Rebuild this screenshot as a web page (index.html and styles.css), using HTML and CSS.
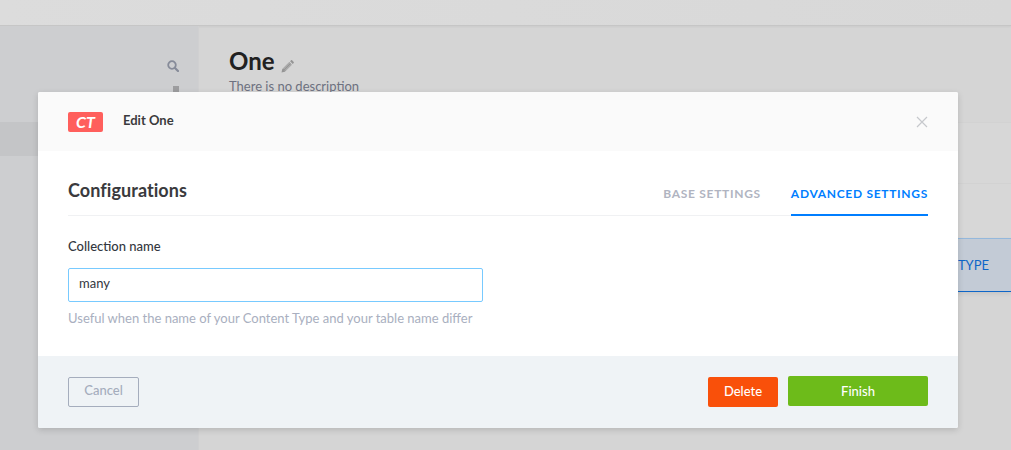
FILE: index.html
```html
<!DOCTYPE html>
<html lang="en">
<head>
<meta charset="utf-8">
<title>Edit One</title>
<link rel="stylesheet" href="styles.css">
</head>
<body>
<div class="page">
  <header class="topbar"></header>
  <div class="layout">
    <aside class="sidebar">
      <div class="side-search">
        <svg class="search-icon" viewBox="0 0 12 12" width="12" height="12"><circle cx="5" cy="5" r="3.800" fill="none" stroke="#868b99" stroke-width="1.800"/><path d="M8 8L11 11" stroke="#868b99" stroke-width="2.200" stroke-linecap="round"/></svg>
      </div>
      <div class="side-mark"></div>
      <div class="side-active"></div>
    </aside>
    <main class="main">
      <div class="title-row">
        <h1 class="title">One</h1>
        <svg class="pencil" viewBox="0.5 0.5 13 13" width="13" height="13"><path d="M1 13l.8-3.400 7-7 2.600 2.600-7 7z" fill="#959595"/><path d="M9.600 1.800l1-1c.3-.3.7-.3 1 0l1.600 1.600c.3.3.3.7 0 1l-1 1z" fill="#959595"/><path d="M3 9.500l6.300-6.300M4.500 11l6.300-6.300" stroke="#d5d5d5" stroke-width=".6"/></svg>
      </div>
      <p class="subtitle">There is no description</p>
      <div class="rows">
        <div class="row"></div>
        <div class="row"></div>
      </div>
      <div class="add-wrap"><span class="add-btn">ADD NEW FIELD TO THIS CONTENT TYPE</span></div>
    </main>
  </div>
</div>

<section class="modal">
  <div class="modal-head">
    <span class="badge">CT</span>
    <span class="modal-title">Edit One</span>
    <svg class="close" viewBox="0 0 12 12" width="12" height="12"><path d="M1 1l10 10M11 1L1 11" stroke="#c6c8cc" stroke-width="1.200" fill="none"/></svg>
  </div>
  <div class="modal-body">
    <div class="tabs-row">
      <h2 class="section-title">Configurations</h2>
      <nav class="tabs">
        <span class="tab">BASE SETTINGS</span>
        <span class="tab tab-active">ADVANCED SETTINGS</span>
      </nav>
    </div>
    <div class="field">
      <label class="label" for="cname">Collection name</label>
      <input class="input" id="cname" type="text" value="many">
      <p class="hint">Useful when the name of your Content Type and your table name differ</p>
    </div>
  </div>
  <div class="modal-foot">
    <button class="btn btn-cancel">Cancel</button>
    <div class="foot-actions">
      <button class="btn btn-delete">Delete</button>
      <button class="btn btn-finish">Finish</button>
    </div>
  </div>
</section>
</body>
</html>
```
FILE: styles.css
```css
* { box-sizing: border-box; }
html, body { margin: 0; padding: 0; height: 100%; overflow: hidden; }
body { font-family: Lato, "Open Sans", sans-serif; background: #d5d5d5; position: relative; }
.page { height: 450px; display: flex; flex-direction: column; }
.topbar { height: 26px; flex: none; background: linear-gradient(90deg, #dcdcdc, #d8d8d8); border-bottom: 1px solid #c6c6c6; box-shadow: 0 1px 2px rgba(0,0,0,.05); }
.layout { flex: 1; display: flex; min-height: 0; }
.sidebar { width: 199px; flex: none; background: #cdced0; border-right: 1px solid #d0d0d1; padding-top: 34px; display: flex; flex-direction: column; }
.side-search { height: 12px; display: flex; justify-content: flex-end; padding-right: 19px; }
.side-mark { width: 6px; height: 8px; background: #9d9d9f; margin: 14px 0 0 173px; }
.side-active { height: 34px; margin-top: 28px; background: #c4c5c7; }
.main { flex: 1; min-width: 0; padding: 21px 0 0 30px; color: #222; }
.title-row { display: flex; align-items: flex-end; height: 28px; }
.title { margin: 0; font-size: 24px; font-weight: 700; line-height: 28px; color: #212121; }
.pencil { margin: 0 0 2px 6px; }
.subtitle { margin: 3px 0 0; font-size: 13px; line-height: 16px; color: #6d7180; }
.rows { margin-top: 28px; margin-left: -30px; }
.row { height: 61px; border-top: 1px solid #d2d2d2; background: #d7d7d7; }
.add-wrap { height: 54px; margin-top: -6px; display: flex; justify-content: flex-end; }
.add-btn { height: 54px; width: 500px; flex: none; display: flex; align-items: center; justify-content: flex-end; padding-right: 22px; font-size: 13px; font-weight: 400; color: #0e66c8; background: #c3cbd6; border-top: 1px solid #94b8dc; border-bottom: 1px solid #0e66c8; box-shadow: 0 2px 4px rgba(0,0,0,.08); }
.modal { position: absolute; left: 38px; top: 92px; width: 920px; height: 336px; background: #fff; border-radius: 2px; box-shadow: 0 2px 6px rgba(0,0,0,.15); display: flex; flex-direction: column; overflow: hidden; }
.modal-head { height: 59px; flex: none; background: #fafafa; display: flex; align-items: center; padding: 0 30px; }
.badge { width: 35px; height: 20px; border-radius: 2px; background: #ff5f5c; color: #fff; font-size: 16px; font-weight: 700; font-style: italic; line-height: 20px; text-align: center; }
.modal-title { margin: -4px 0 0 20px; font-size: 13px; font-weight: 700; color: #3a3a3d; }
.close { margin-left: auto; margin-top: 1px; }
.modal-body { flex: 1; padding: 0 30px; }
.tabs-row { height: 65px; display: flex; justify-content: space-between; align-items: stretch; border-bottom: 1px solid #f0f1f3; }
.section-title { margin: 27px 0 0; font-size: 18px; font-weight: 700; line-height: 24px; letter-spacing: .07px; color: #3a3a3d; }
.tabs { display: flex; gap: 30px; }
.tab { padding-top: 35px; height: 65px; font-size: 12px; font-weight: 700; letter-spacing: .7px; line-height: 15px; color: #b0b4c1; }
.tab-active { color: #007eff; border-bottom: 2px solid #007eff; }
.field { padding-top: 22px; }
.label { display: block; font-size: 13px; font-weight: 500; line-height: 16px; color: #333740; }
.input { display: block; width: 415px; height: 34px; margin-top: 14px; padding: 0 10px 5px; border: 1px solid #78caff; border-radius: 2px; outline: 0; font: 400 13px Lato, sans-serif; color: #333740; background: #fff; }
.hint { margin: 8px 0 0; font-size: 13px; line-height: 16px; color: #a9afc0; }
.modal-foot { height: 72px; flex: none; background: #eff3f6; display: flex; justify-content: space-between; padding: 0 30px; }
.foot-actions { display: flex; gap: 10px; align-items: flex-start; }
.btn { font-family: Lato, sans-serif; font-size: 13px; font-weight: 500; border-radius: 2px; border: 0; padding: 0; }
.btn-cancel { width: 71px; height: 30px; margin-top: 21px; padding-bottom: 5px; background: transparent; border: 1px solid #a5adbd; color: #a5adbd; }
.btn-delete { width: 70px; height: 30px; margin-top: 21px; padding-bottom: 2px; background: #f9500a; color: #fff; }
.btn-finish { width: 140px; height: 30px; margin-top: 20px; background: #6dbb1a; color: #fff; }
```
